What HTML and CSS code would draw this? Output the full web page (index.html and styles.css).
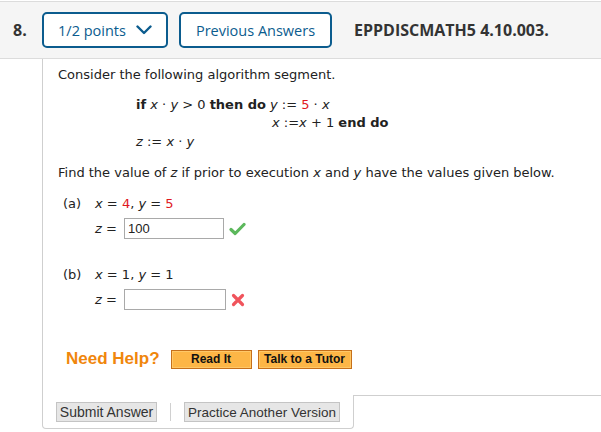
FILE: index.html
```html
<!DOCTYPE html>
<html>
<head>
<meta charset="utf-8">
<link rel="stylesheet" href="styles.css">
</head>
<body>
<div class="header">
  <span class="qnum">8.</span>
  <button class="hbtn points">1/2 points
    <svg class="chev" width="16" height="10" viewBox="0 0 16 10"><polyline points="1.5,1.5 8,8 14.5,1.5" fill="none" stroke="#0b5c8e" stroke-width="2.4" stroke-linecap="round" stroke-linejoin="round"/></svg>
  </button>
  <button class="hbtn prev">Previous Answers</button>
  <span class="code">EPPDISCMATH5 4.10.003.</span>
</div>
<div class="question">
  <p class="intro">Consider the following algorithm segment.</p>
  <div class="algo">
    <div class="row1">
      <span class="cond"><b>if</b> <i>x</i> · <i>y</i> &gt; 0 <b>then do</b></span>
      <span class="body">
        <span class="line"><i>y</i> := <span class="red">5</span> · <i>x</i></span>
        <span class="line l2"><i>x</i> :=<i>x</i> + 1 <b>end do</b></span>
      </span>
    </div>
    <div class="line last"><i>z</i> := <i>x</i> · <i>y</i></div>
  </div>
  <p class="find">Find the value of <i>z</i> if prior to execution <i>x</i> and <i>y</i> have the values given below.</p>
  <div class="part">
    <div class="given"><span class="lbl">(a)</span><span><i>x</i> = <span class="red">4</span>, <i>y</i> = <span class="red">5</span></span></div>
    <div class="answer"><span class="zeq"><i>z</i> =</span><input class="inp" type="text" value="100">
      <svg class="mark" width="17" height="14" viewBox="0 0 17 14"><polyline points="2,7.5 6.2,11.5 15,2.5" fill="none" stroke="#5cb85c" stroke-width="3.2" stroke-linecap="round" stroke-linejoin="round"/></svg>
    </div>
  </div>
  <div class="part partb">
    <div class="given"><span class="lbl">(b)</span><span><i>x</i> = 1, <i>y</i> = 1</span></div>
    <div class="answer"><span class="zeq"><i>z</i> =</span><input class="inp inpb" type="text" value="">
      <svg class="mark xmark" width="14" height="14" viewBox="0 0 14 14"><path d="M2.5,2.5 L11.5,11.5 M11.5,2.5 L2.5,11.5" fill="none" stroke="#f0545c" stroke-width="3.2" stroke-linecap="round"/></svg>
    </div>
  </div>
  <div class="help">
    <span class="needhelp">Need Help?</span>
    <button class="obtn readit">Read It</button>
    <button class="obtn tutor">Talk to a Tutor</button>
  </div>
</div>
<div class="footer">
  <div class="actions">
    <button class="gbtn submit">Submit Answer</button>
    <span class="sep"></span>
    <button class="gbtn practice">Practice Another Version</button>
  </div>
  <div class="rest"></div>
</div>
</body>
</html>
```
FILE: styles.css
```css
html, body {
  margin: 0;
  padding: 0;
  background: #fff;
}
body {
  padding-top: 1px;
  font-family: "DejaVu Sans", Verdana, sans-serif;
  color: #222;
}
.header {
  display: flex;
  align-items: center;
  height: 56px;
  background: #f5f5f5;
  border-top: 1px solid #dcdcdc;
  border-bottom: 1px solid #dcdcdc;
  font-family: "Open Sans", sans-serif;
}
.qnum {
  width: 42px;
  padding-left: 13px;
  box-sizing: border-box;
  font-weight: 700;
  font-size: 16px;
  color: #333;
}
.hbtn {
  display: flex;
  align-items: center;
  justify-content: center;
  height: 36px;
  box-sizing: border-box;
  border: 2px solid #0b5c8e;
  border-radius: 5px;
  background: #fff;
  color: #0b5c8e;
  font-family: "Open Sans", sans-serif;
  font-size: 14.5px;
  padding: 0;
}
.points { width: 126px; gap: 10px; padding-left: 0; }
.prev { width: 153px; margin-left: 11px; }
.code {
  margin-left: 22px;
  font-weight: 700;
  font-size: 16px;
  color: #333;
}
.question {
  margin-left: 42px;
  border-left: 1px solid #cfcfcf;
  padding: 7px 0 26px 15px;
  font-size: 13px;
}
.intro { margin: 0; line-height: 18px; }
.algo {
  margin: 12px 0 0 78px;
  line-height: 18px;
}
.algo b {
  font-family: "DejaVu Sans", Verdana, sans-serif;
  font-weight: 700;
  font-size: 13px;
}
.row1 { display: flex; }
.cond { white-space: pre; margin-right: 4px; }
.body { display: flex; flex-direction: column; }
.line { white-space: pre; }
.l2 { padding-left: 2px; }
.last { margin-top: 1px; }
.red { color: #e0181e; }
.find { margin: 13px 0 0; line-height: 18px; }
.part { margin-top: 13px; margin-left: 5px; }
.partb { margin-top: 27px; }
.given { display: flex; line-height: 18px; }
.lbl { width: 32px; }
.answer {
  display: flex;
  align-items: center;
  margin-top: 5px;
  margin-left: 32px;
}
.zeq { width: 29px; }
.inp {
  width: 100px;
  height: 21px;
  box-sizing: border-box;
  border: 1px solid #a9a9a9;
  padding: 0 3px;
  font-family: "Liberation Sans", Arial, sans-serif;
  font-size: 13px;
  color: #222;
  margin: 0;
}
.inpb { width: 102px; }
.mark { margin-left: 5px; }
.xmark { margin-left: 5px; }
.help {
  display: flex;
  align-items: center;
  margin-top: 39px;
  margin-left: 8px;
}
.needhelp {
  font-family: "Liberation Sans", Arial, sans-serif;
  font-weight: 700;
  font-size: 17px;
  color: #f0860c;
  margin-right: 11px;
}
.obtn {
  height: 19px;
  box-sizing: border-box;
  border: 1px solid #c6701a;
  background: #fdb646;
  box-shadow: inset 0 0 0 1px #ffc868;
  font-family: "Liberation Sans", Arial, sans-serif;
  font-weight: 700;
  font-size: 12px;
  color: #111;
  padding: 0;
}
.readit { width: 81px; }
.tutor { width: 94px; margin-left: 6px; }
.footer {
  display: flex;
  margin-left: 42px;
}
.actions {
  display: flex;
  align-items: center;
  border-left: 1px solid #cfcfcf;
  border-right: 1px solid #cfcfcf;
  border-bottom: 1px solid #cfcfcf;
  border-radius: 0 0 4px 4px;
  padding: 7px 13px 6px 13px;
}
.gbtn {
  height: 20px;
  box-sizing: border-box;
  border: 1px solid #c4c4c4;
  background: #e6e6e6;
  font-family: "Liberation Sans", Arial, sans-serif;
  font-size: 14px;
  color: #333;
  padding: 0;
  white-space: nowrap;
}
.submit { width: 101px; }
.practice { width: 156px; font-size: 13.5px; }
.sep {
  width: 1px;
  height: 18px;
  background: #d0d0d0;
  margin: 0 13px 0 13px;
}
.rest {
  flex: 1;
  border-top: 1px solid #cfcfcf;
}
```
